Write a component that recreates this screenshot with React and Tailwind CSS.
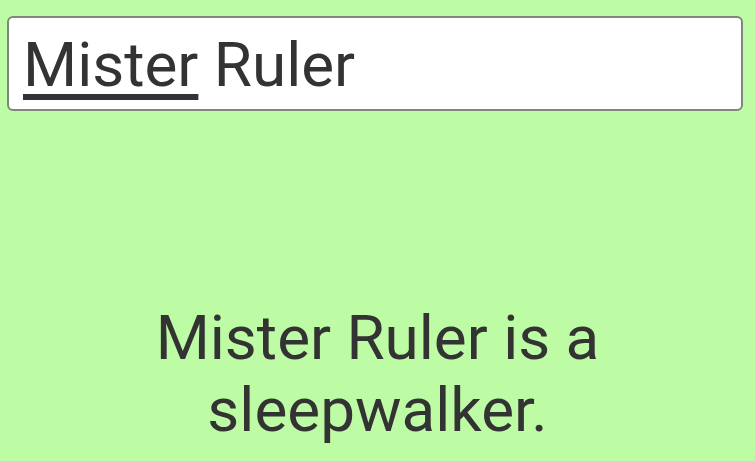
import React from 'react';

const App = () => {
  return (
    <div className="w-full h-[461px] bg-[#bdfca4] overflow-hidden flex flex-col" style={{ fontFamily: 'Roboto, sans-serif' }}>
      <div className="ml-[7px] mr-[12px] mt-[16px] h-[95px] bg-white border-2 border-[#7f867c] rounded-[6px] flex items-center pl-[14px]">
        <span className="text-[62px] leading-none text-[#333333] whitespace-nowrap pt-[2px]">
          <span className="underline decoration-[6px] underline-offset-[8px] decoration-[#333333]">Mister</span> Ruler
        </span>
      </div>
      <div className="mt-[191px] text-center text-[62px] leading-[72px] text-[#333333] px-[130px]">
        Mister Ruler is a sleepwalker.
      </div>
    </div>
  );
};

export default App;
